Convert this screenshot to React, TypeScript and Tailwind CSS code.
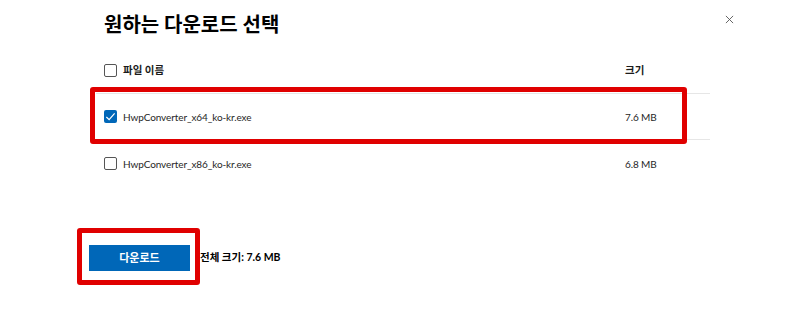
import React from 'react'

const font = {fontFamily: 'Lato, "Noto Sans CJK KR", sans-serif'}

function Box({checked}: {checked?: boolean}) {
  if (checked) {
    return (
      <span className="flex h-[13px] w-[13px] items-center justify-center rounded-[2px] bg-[#0067b8]">
        <svg width="11" height="11" viewBox="0 0 12 12" fill="none">
          <path d="M1.5 6.5 L4.5 9.5 L10.5 2.5" stroke="white" strokeWidth="1.3" />
        </svg>
      </span>
    )
  }
  return <span className="block h-[13px] w-[13px] rounded-[2px] border border-[#555] bg-white"></span>
}

const files = [
  {name: 'HwpConverter_x64_ko-kr.exe', size: '7.6 MB', checked: true},
  {name: 'HwpConverter_x86_ko-kr.exe', size: '6.8 MB', checked: false},
]

export default function App() {
  return (
    <div className="relative h-[312px] w-[800px] overflow-hidden bg-white text-[#1b1b1b]" style={font}>
      <div className="flex justify-between pl-[104px] pr-[66px] pt-[8px]">
        <h1 className="text-[20px] font-bold leading-[32px] text-black">원하는 다운로드 선택</h1>
        <svg className="mt-[7px]" width="9" height="9" viewBox="0 0 10 10">
          <path d="M1 1 L9 9 M9 1 L1 9" stroke="#555" strokeWidth="1" />
        </svg>
      </div>

      <div className="ml-[96px] mt-[8px] w-[614px] text-[10px] tracking-[-0.1px]">
        <div className="flex h-[46px] items-center border-b border-[#e6e6e6] pl-[8px]">
          <Box />
          <span className="ml-[6px] w-[502px] text-[10.5px] font-bold tracking-normal">파일 이름</span>
          <span className="text-[10.5px] font-bold tracking-normal">크기</span>
        </div>
        {files.map(f => (
          <div key={f.name} className="flex h-[46px] items-center border-b border-[#e6e6e6] pl-[8px] last:border-b-0">
            <Box checked={f.checked} />
            <span className="ml-[6px] w-[502px] pt-[2px] text-[#262626]">{f.name}</span>
            <span className="pt-[2px] text-[#262626]">{f.size}</span>
          </div>
        ))}
      </div>

      <div className="ml-[89px] mt-[59px] flex items-center gap-[10px]">
        <button className="h-[26px] w-[101px] bg-[#0067b8] text-[11px] font-bold text-white">다운로드</button>
        <span className="text-[10.5px] font-bold text-black">전체 크기: 7.6 MB</span>
      </div>

      <div className="absolute left-[90px] top-[87px] h-[57px] w-[597px] rounded-[3px] border-[5px] border-[#e00000]"></div>
      <div className="absolute left-[77px] top-[228px] h-[57px] w-[123px] rounded-[3px] border-[5px] border-[#e00000]"></div>
    </div>
  )
}
